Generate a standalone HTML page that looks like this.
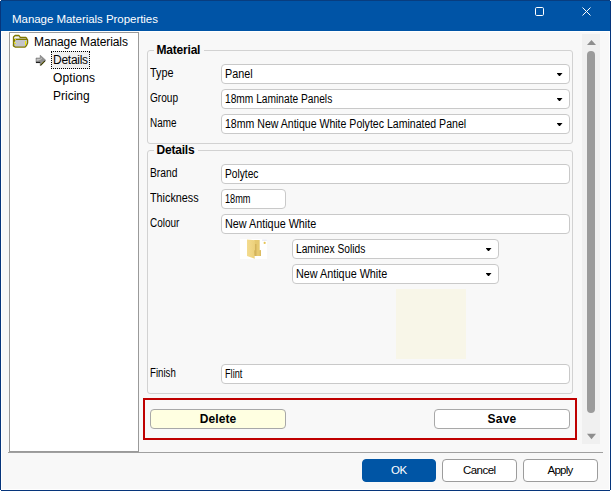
<!DOCTYPE html>
<html>
<head>
<meta charset="utf-8">
<title>Manage Materials Properties</title>
<style>
html,body{margin:0;padding:0;}
body{width:611px;height:491px;overflow:hidden;background:#f8f8f8;font-family:"Liberation Sans",sans-serif;font-size:11px;color:#000;position:relative;}
.abs{position:absolute;box-sizing:border-box;}
#win{left:0;top:0;width:611px;height:491px;border:1px solid #06357b;border-top:none;background:#f8f8f8;box-shadow:inset 0 0 0 1px #fff;}
#title{left:0;top:0;width:611px;height:31px;background:#0054a6;border-top:1px solid #083d7f;border-right:1px solid #06357b;border-left:1px solid #06357b;}
#titletext{left:12px;top:11px;color:#fff;font-size:11.5px;line-height:16px;white-space:nowrap;letter-spacing:-0.04px;}
#whiteline{left:1px;top:31px;width:609px;height:1px;background:#fff;}
#tree{left:9px;top:32px;width:130px;height:420px;background:#fff;border:1px solid #9a9a9a;}
.tn{font-size:12px;line-height:16px;white-space:nowrap;color:#000;}
.lbl{font-size:12px;line-height:13px;white-space:nowrap;}
.sx{display:inline-block;transform-origin:0 50%;white-space:nowrap;}
.gb{border:1px solid #d2d2d2;border-radius:3px;}
.gbt{font-weight:bold;font-size:12px;line-height:13px;background:#f8f8f8;padding:0 4px 0 3px;white-space:nowrap;}
.inp{background:#fff;border:1px solid #c9c9c9;border-radius:4px;font-size:12px;line-height:18px;padding-left:2.5px;white-space:nowrap;overflow:hidden;}
.cb:after{content:"";position:absolute;right:6.5px;top:8px;width:6px;height:3.4px;background:#000;clip-path:polygon(0 0,100% 0,50% 100%);}
.btn{background:#fff;border:1px solid #9c9c9c;border-radius:4px;text-align:center;font-size:11.5px;line-height:21px;white-space:nowrap;}
.bbtn{font-weight:bold;font-size:12px;line-height:18px;}
</style>
</head>
<body>
<div id="win" class="abs"></div>
<div id="title" class="abs"></div>
<div id="titletext" class="abs">Manage Materials Properties</div>
<svg class="abs" style="left:530px;top:2px" width="70" height="20" viewBox="0 0 70 20">
  <rect x="5.5" y="5.5" width="8" height="8" rx="1.2" fill="none" stroke="#fff" stroke-width="1"/>
  <path d="M52.5 5.5 L60.5 13.5 M60.5 5.5 L52.5 13.5" stroke="#fff" stroke-width="1" fill="none"/>
</svg>
<div id="whiteline" class="abs"></div>

<!-- tree -->
<div id="tree" class="abs"></div>
<svg class="abs" style="left:12px;top:34px" width="18" height="16" viewBox="0 0 18 16">
  <path d="M1.5 11.8 L1.5 3 L3.1 1.5 L7 1.5 L8.3 3.4 L13.8 3.4 L14.7 4.3 L14.7 5.4 L3.1 5.4 Z" fill="#dcdcd4" stroke="#807800" stroke-width="1.3" stroke-linejoin="round"/>
  <path d="M2.6 3 L6.6 3 L7 4.6 L2.6 4.6 Z" fill="#f4f4f4"/>
  <path d="M3.1 5.4 L15.2 5.4 L15.6 5.9 L15.6 8.9 L14.5 11.5 L13 13.1 L3.1 13.1 L1.5 11.8 L1.8 8 Z" fill="#c4c4c8" stroke="#807800" stroke-width="1.3" stroke-linejoin="round"/>
  <rect x="3" y="5" width="1" height="1" fill="#f2f000"/>
  <rect x="2" y="8" width="1" height="1" fill="#f2f000"/>
  <rect x="3" y="9" width="1" height="1" fill="#f2f000"/>
  <rect x="13" y="7" width="1" height="4" fill="#f2f000"/>
</svg>
<div class="abs tn" style="left:34px;top:34px;letter-spacing:-0.1px">Manage Materials</div>
<svg class="abs" style="left:35px;top:54px" width="12" height="13" viewBox="0 0 12 13">
  <path d="M1 4 L5.2 4 L5.2 1.2 L10.8 6.2 L5.2 11.7 L5.2 8.7 L1 8.7 Z" fill="#909090" stroke="#6a6a6a" stroke-width="0.5"/>
  <path d="M1.6 4.8 L5.8 4.8 L5.8 3.2 L7 4.4 L6 5.6 L3.6 6.4 L1.6 7 Z" fill="#c4c4c4"/>
  <path d="M1 8.4 L5.2 8.4" stroke="#111" stroke-width="1" fill="none"/>
  <path d="M5.6 11.3 L10 6.9" stroke="#2a2a00" stroke-width="1.1" fill="none"/>
  <path d="M6 10.4 L9 7.4" stroke="#b0a800" stroke-width="0.8" stroke-dasharray="1 1" fill="none"/>
</svg>
<div class="abs" style="left:51px;top:51px;width:39px;height:18px;background:#f0f0f0;border:1px dotted #000;"></div>
<div class="abs tn" style="left:53px;top:52px;letter-spacing:-0.26px">Details</div>
<div class="abs tn" style="left:53px;top:70px;letter-spacing:0.12px">Options</div>
<div class="abs tn" style="left:53px;top:88px;letter-spacing:0px">Pricing</div>

<!-- Material group -->
<div class="abs gb" style="left:147px;top:50px;width:426px;height:94px"></div>
<div class="abs gbt" style="left:153.5px;top:44px;letter-spacing:-0.2px">Material</div>
<div class="abs lbl" style="left:150px;top:67px"><span class="sx" style="transform:scaleX(0.9)">Type</span></div>
<div class="abs lbl" style="left:150px;top:92px"><span class="sx" style="transform:scaleX(0.843)">Group</span></div>
<div class="abs lbl" style="left:150px;top:117px"><span class="sx" style="transform:scaleX(0.8255)">Name</span></div>
<div class="abs inp cb" style="left:221px;top:64px;width:349px;height:20px"><span class="sx" style="transform:scaleX(0.9)">Panel</span></div>
<div class="abs inp cb" style="left:221px;top:89px;width:349px;height:20px"><span class="sx" style="transform:scaleX(0.8506)">18mm Laminate Panels</span></div>
<div class="abs inp cb" style="left:221px;top:114px;width:349px;height:20px"><span class="sx" style="transform:scaleX(0.8795)">18mm New Antique White Polytec Laminated Panel</span></div>

<!-- Details group -->
<div class="abs gb" style="left:147px;top:150px;width:426px;height:244px"></div>
<div class="abs gbt" style="left:153.5px;top:144px;letter-spacing:-0.2px">Details</div>
<div class="abs lbl" style="left:150px;top:167px"><span class="sx" style="transform:scaleX(0.855)">Brand</span></div>
<div class="abs lbl" style="left:150px;top:192px"><span class="sx" style="transform:scaleX(0.9)">Thickness</span></div>
<div class="abs lbl" style="left:150px;top:217px"><span class="sx" style="transform:scaleX(0.8297)">Colour</span></div>
<div class="abs lbl" style="left:150px;top:367px"><span class="sx" style="transform:scaleX(0.8047)">Finish</span></div>
<div class="abs inp" style="left:221px;top:164px;width:349px;height:20px"><span class="sx" style="transform:scaleX(0.8486)">Polytec</span></div>
<div class="abs inp" style="left:221px;top:189px;width:65px;height:20px"><span class="sx" style="transform:scaleX(0.765)">18mm</span></div>
<div class="abs inp" style="left:221px;top:214px;width:349px;height:20px"><span class="sx" style="transform:scaleX(0.9)">New Antique White</span></div>
<div class="abs inp" style="left:221px;top:364px;width:349px;height:20px"><span class="sx" style="transform:scaleX(0.7629)">Flint</span></div>
<div class="abs inp cb" style="left:292px;top:239px;width:207px;height:20px"><span class="sx" style="transform:scaleX(0.8519)">Laminex Solids</span></div>
<div class="abs inp cb" style="left:292px;top:264px;width:207px;height:20px"><span class="sx" style="transform:scaleX(0.9)">New Antique White</span></div>
<!-- folder image -->
<div class="abs" style="left:240px;top:239px;width:27px;height:20px;background:#fff"></div>
<svg class="abs" style="left:240px;top:239px" width="27" height="20" viewBox="0 0 27 20">
  <defs><linearGradient id="fg" x1="0" y1="0" x2="1" y2="0"><stop offset="0" stop-color="#f4dc90"/><stop offset="1" stop-color="#ecd07a"/></linearGradient></defs>
  <path d="M14 1 L19.7 1 L19.7 11.3 L21 11.3 L21 17.1 L14 17.1 Z" fill="#e6c970"/>
  <path d="M14.9 5 L16.5 5 L16.5 17.1 L14.5 17.1 Z" fill="#d3b35c"/>
  <path d="M19.7 11.3 L21 11.3 L21 17.1 L19.7 17.1 Z" fill="#dcbc62"/>
  <path d="M7 0.6 L14.95 1.2 L14.95 11.3 L13.9 11.8 L14.85 19.8 L7 16.9 Z" fill="url(#fg)"/>
  <path d="M14.95 11.3 L14.95 17 L14.6 17.6 L13.9 11.8 Z" fill="#d9ba62"/>
  <circle cx="24.65" cy="3.9" r="1.1" fill="#e6c455"/>
  <rect x="22.1" y="0.7" width="4.8" height="0.8" fill="#d4d8ec"/>
</svg>
<!-- swatch -->
<div class="abs" style="left:396px;top:289px;width:70px;height:70px;background:#f8f6e8"></div>

<!-- red box -->
<div class="abs" style="left:143px;top:398px;width:434px;height:42px;border:2px solid #bf0000;"></div>
<div class="abs btn bbtn" style="left:150px;top:409px;width:136px;height:20px;background:#ffffe1;border-color:#a8a8a8;letter-spacing:0.1px">Delete</div>
<div class="abs btn bbtn" style="left:434px;top:409px;width:136px;height:20px;border-color:#a8a8a8;letter-spacing:0.25px">Save</div>

<!-- scrollbar -->
<div class="abs" style="left:582px;top:34px;width:18px;height:410px;background:#f0f0f0"></div>
<div class="abs" style="left:587px;top:51px;width:8px;height:362px;background:#9b9b9b;border-radius:4px"></div>
<svg class="abs" style="left:582px;top:34px" width="18" height="410" viewBox="0 0 18 410">
  <path d="M5 11 L9.5 6 L14 11 Z" fill="#8e8e8e"/>
  <path d="M5 399.8 L9.5 405.2 L14 399.8 Z" fill="#8e8e8e"/>
</svg>

<!-- bottom -->
<div class="abs" style="left:8px;top:452px;width:595px;height:1px;background:#a0a0a0"></div>
<div class="abs btn" style="left:362px;top:459px;width:74px;height:23px;background:#0055a5;border-color:#0055a5;color:#fff;letter-spacing:-0.5px;text-indent:-0.5px">OK</div>
<div class="abs btn" style="left:442px;top:459px;width:75px;height:23px;letter-spacing:-0.55px;text-indent:-0.5px">Cancel</div>
<div class="abs btn" style="left:523px;top:459px;width:75px;height:23px;letter-spacing:-0.8px;text-indent:-1px">Apply</div>
<div class="abs" style="left:0;top:0;width:1px;height:1px;background:#fff"></div>
<div class="abs" style="left:610px;top:0;width:1px;height:1px;background:#fff"></div>
<div class="abs" style="left:0;top:490px;width:1px;height:1px;background:#fff"></div>
<div class="abs" style="left:610px;top:490px;width:1px;height:1px;background:#fff"></div>
</body>
</html>
